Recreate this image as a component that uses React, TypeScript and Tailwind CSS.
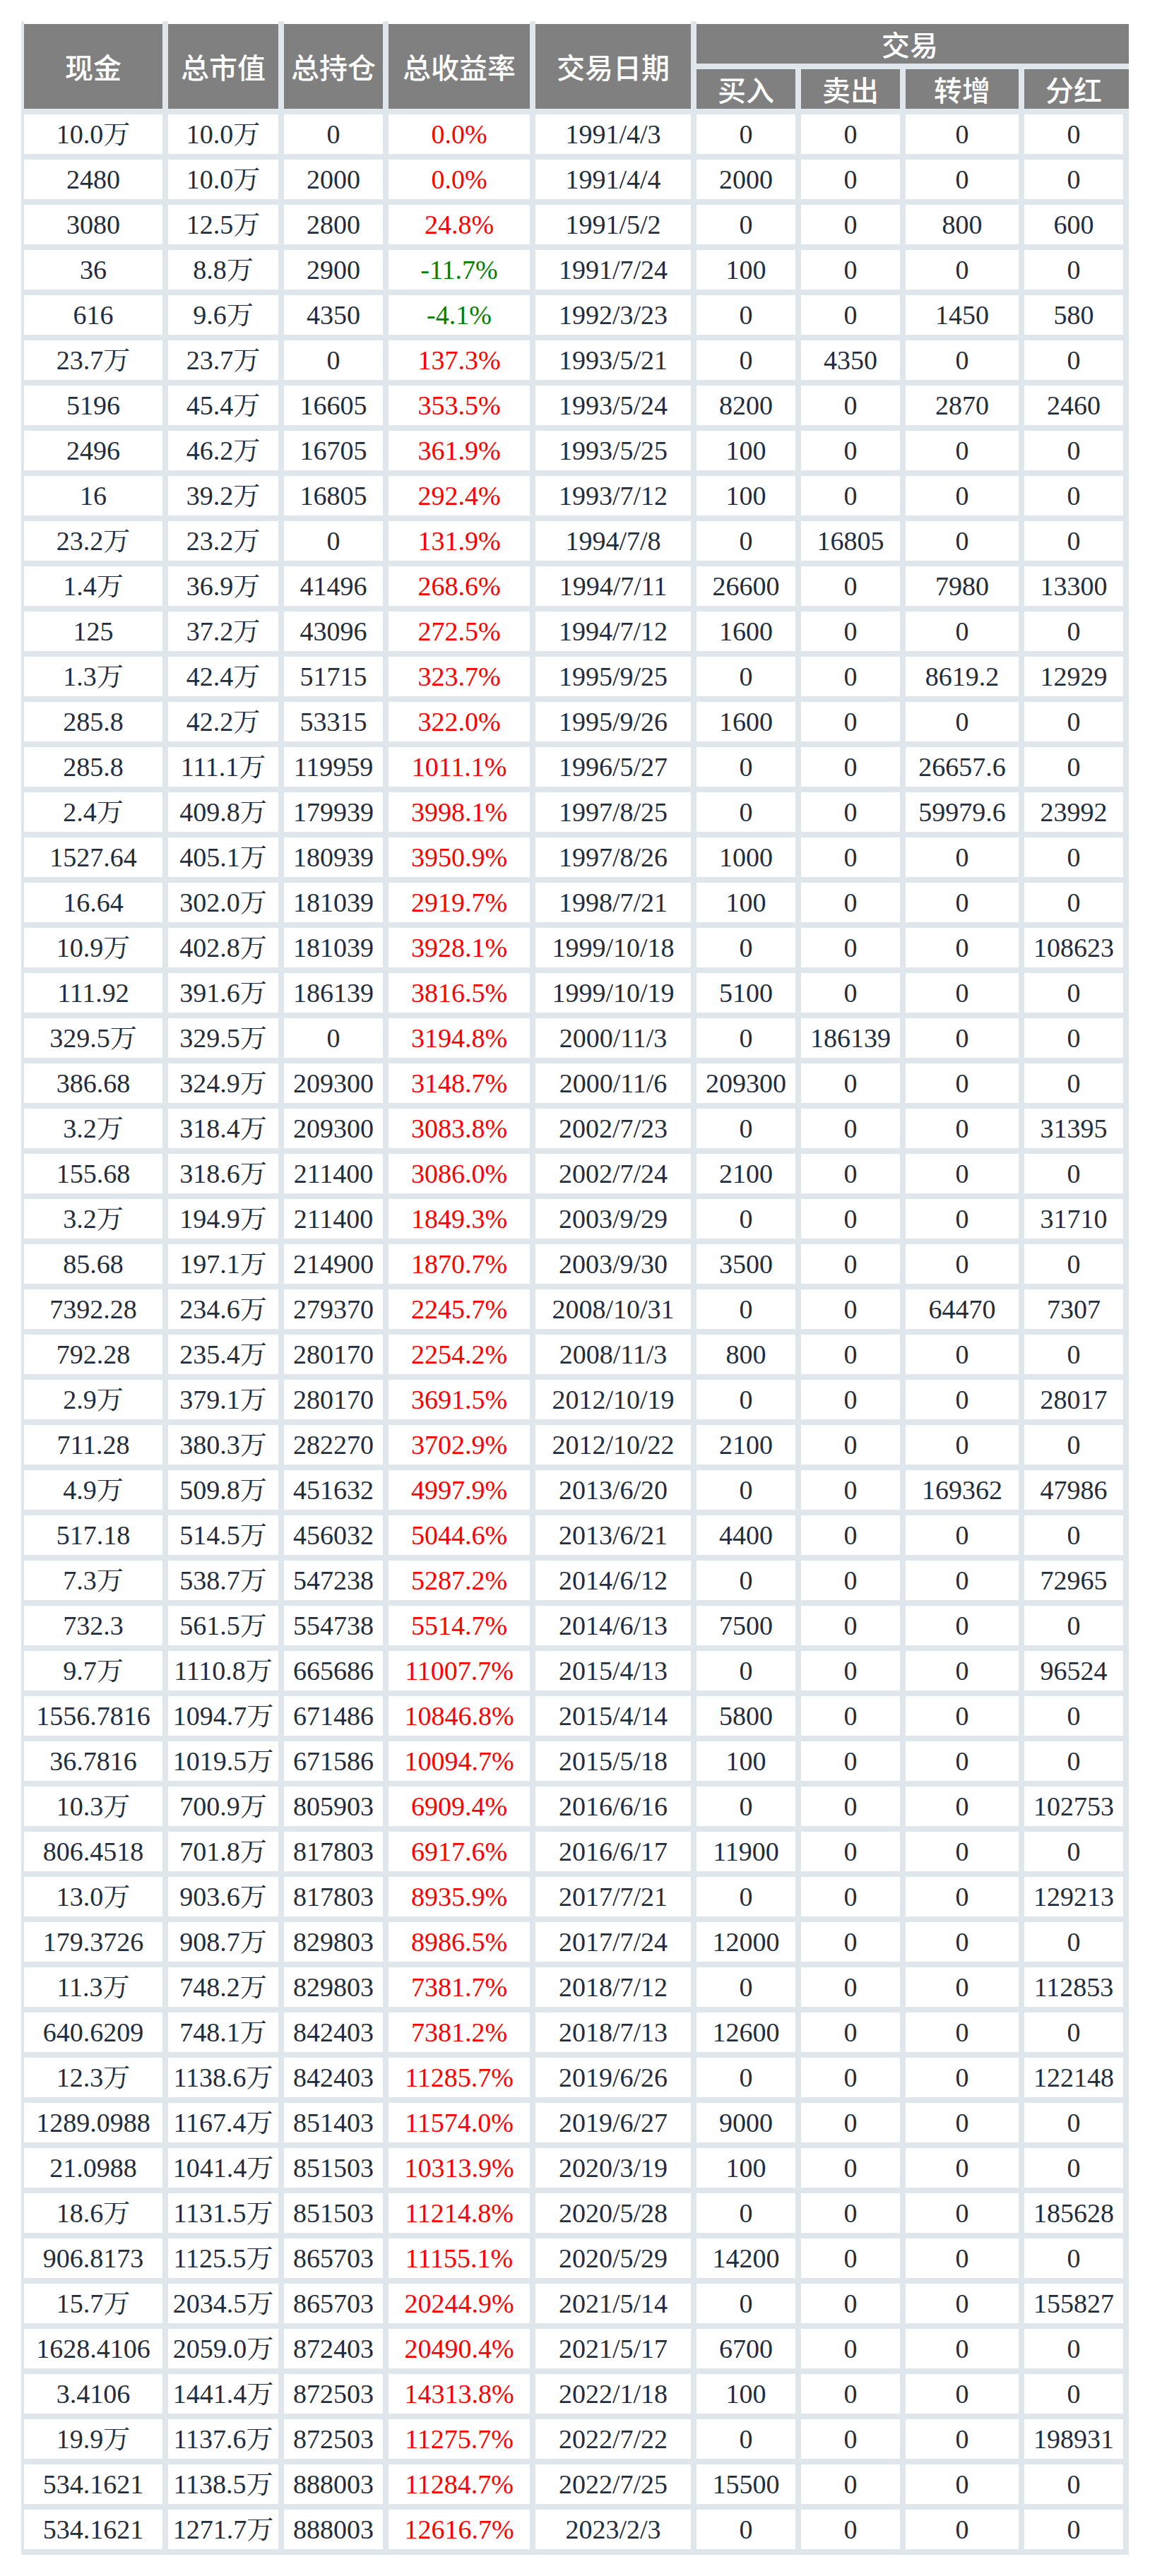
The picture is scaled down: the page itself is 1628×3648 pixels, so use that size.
const rows = `10.0万 10.0万 0 0.0% 1991/4/3 0 0 0 0
2480 10.0万 2000 0.0% 1991/4/4 2000 0 0 0
3080 12.5万 2800 24.8% 1991/5/2 0 0 800 600
36 8.8万 2900 -11.7% 1991/7/24 100 0 0 0
616 9.6万 4350 -4.1% 1992/3/23 0 0 1450 580
23.7万 23.7万 0 137.3% 1993/5/21 0 4350 0 0
5196 45.4万 16605 353.5% 1993/5/24 8200 0 2870 2460
2496 46.2万 16705 361.9% 1993/5/25 100 0 0 0
16 39.2万 16805 292.4% 1993/7/12 100 0 0 0
23.2万 23.2万 0 131.9% 1994/7/8 0 16805 0 0
1.4万 36.9万 41496 268.6% 1994/7/11 26600 0 7980 13300
125 37.2万 43096 272.5% 1994/7/12 1600 0 0 0
1.3万 42.4万 51715 323.7% 1995/9/25 0 0 8619.2 12929
285.8 42.2万 53315 322.0% 1995/9/26 1600 0 0 0
285.8 111.1万 119959 1011.1% 1996/5/27 0 0 26657.6 0
2.4万 409.8万 179939 3998.1% 1997/8/25 0 0 59979.6 23992
1527.64 405.1万 180939 3950.9% 1997/8/26 1000 0 0 0
16.64 302.0万 181039 2919.7% 1998/7/21 100 0 0 0
10.9万 402.8万 181039 3928.1% 1999/10/18 0 0 0 108623
111.92 391.6万 186139 3816.5% 1999/10/19 5100 0 0 0
329.5万 329.5万 0 3194.8% 2000/11/3 0 186139 0 0
386.68 324.9万 209300 3148.7% 2000/11/6 209300 0 0 0
3.2万 318.4万 209300 3083.8% 2002/7/23 0 0 0 31395
155.68 318.6万 211400 3086.0% 2002/7/24 2100 0 0 0
3.2万 194.9万 211400 1849.3% 2003/9/29 0 0 0 31710
85.68 197.1万 214900 1870.7% 2003/9/30 3500 0 0 0
7392.28 234.6万 279370 2245.7% 2008/10/31 0 0 64470 7307
792.28 235.4万 280170 2254.2% 2008/11/3 800 0 0 0
2.9万 379.1万 280170 3691.5% 2012/10/19 0 0 0 28017
711.28 380.3万 282270 3702.9% 2012/10/22 2100 0 0 0
4.9万 509.8万 451632 4997.9% 2013/6/20 0 0 169362 47986
517.18 514.5万 456032 5044.6% 2013/6/21 4400 0 0 0
7.3万 538.7万 547238 5287.2% 2014/6/12 0 0 0 72965
732.3 561.5万 554738 5514.7% 2014/6/13 7500 0 0 0
9.7万 1110.8万 665686 11007.7% 2015/4/13 0 0 0 96524
1556.7816 1094.7万 671486 10846.8% 2015/4/14 5800 0 0 0
36.7816 1019.5万 671586 10094.7% 2015/5/18 100 0 0 0
10.3万 700.9万 805903 6909.4% 2016/6/16 0 0 0 102753
806.4518 701.8万 817803 6917.6% 2016/6/17 11900 0 0 0
13.0万 903.6万 817803 8935.9% 2017/7/21 0 0 0 129213
179.3726 908.7万 829803 8986.5% 2017/7/24 12000 0 0 0
11.3万 748.2万 829803 7381.7% 2018/7/12 0 0 0 112853
640.6209 748.1万 842403 7381.2% 2018/7/13 12600 0 0 0
12.3万 1138.6万 842403 11285.7% 2019/6/26 0 0 0 122148
1289.0988 1167.4万 851403 11574.0% 2019/6/27 9000 0 0 0
21.0988 1041.4万 851503 10313.9% 2020/3/19 100 0 0 0
18.6万 1131.5万 851503 11214.8% 2020/5/28 0 0 0 185628
906.8173 1125.5万 865703 11155.1% 2020/5/29 14200 0 0 0
15.7万 2034.5万 865703 20244.9% 2021/5/14 0 0 0 155827
1628.4106 2059.0万 872403 20490.4% 2021/5/17 6700 0 0 0
3.4106 1441.4万 872503 14313.8% 2022/1/18 100 0 0 0
19.9万 1137.6万 872503 11275.7% 2022/7/22 0 0 0 198931
534.1621 1138.5万 888003 11284.7% 2022/7/25 15500 0 0 0
534.1621 1271.7万 888003 12616.7% 2023/2/3 0 0 0 0`
  .split("\n")
  .map((line) => line.split(" "));

const head =
  "bg-[#808080] text-white flex items-center justify-center font-['Noto_Sans_CJK_SC',sans-serif] font-medium text-[40px] leading-none";
const cell =
  "bg-white h-14 flex items-center justify-center font-['Liberation_Serif','Noto_Serif_CJK_SC','Noto_Sans_CJK_SC',serif] text-[38px] leading-none";

const App = () => {
  return (
    <div className="bg-white p-[30px]">
      <div className="grid grid-cols-[196px_156px_140px_200px_220px_140px_140px_160px_140px] gap-2 bg-[#dfe6ec] pl-1 pr-2 pb-2">
        {/* 表头 */}
        <div className={`${head} row-span-2 border-t-4 border-white`}>现金</div>
        <div className={`${head} row-span-2 border-t-4 border-white`}>总市值</div>
        <div className={`${head} row-span-2 border-t-4 border-white`}>总持仓</div>
        <div className={`${head} row-span-2 border-t-4 border-white`}>总收益率</div>
        <div className={`${head} row-span-2 border-t-4 border-white`}>交易日期</div>
        <div className={`${head} col-span-4 h-[60px] border-t-4 border-white -mr-2 pr-2`}>交易</div>
        <div className={`${head} h-14`}>买入</div>
        <div className={`${head} h-14`}>卖出</div>
        <div className={`${head} h-14`}>转增</div>
        <div className={`${head} h-14 -mr-2 pr-2`}>分红</div>

        {/* 数据 */}
        {rows.map((r, i) =>
          r.map((v, j) => (
            <div
              key={`${i}-${j}`}
              className={`${cell} ${
                j === 3
                  ? v.startsWith("-")
                    ? "text-[#008000]"
                    : "text-[#ff0000]"
                  : "text-[#1f2d3d]"
              }`}
            >
              {v}
            </div>
          ))
        )}
      </div>
    </div>
  );
};

export default App;
